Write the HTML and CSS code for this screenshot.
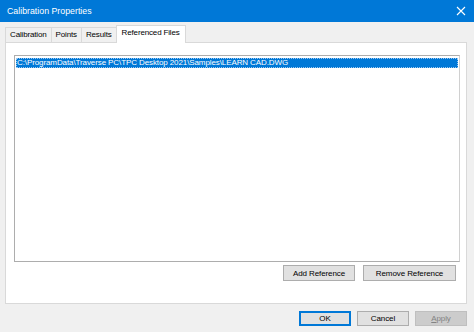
FILE: index.html
```html
<!DOCTYPE html>
<html lang="en" dir="ltr">
    <head>
        <meta charset="utf-8">
        <title>Calibration Properties</title>
        <link rel="stylesheet" href="styles.css">
    </head>
    <body>
        <div class="window">
            <div class="titlebar">
                <span class="title">Calibration Properties</span>
                <svg class="close" width="10" height="10" viewBox="0 0 10 10">
                    <path d="M1 1 L9 9 M9 1 L1 9" stroke="#fff" stroke-width="1.1" fill="none"/>
                </svg>
            </div>
            <div class="tabs">
                <div class="tab">Calibration</div>
                <div class="tab">Points</div>
                <div class="tab">Results</div>
                <div class="tab active">Referenced Files</div>
            </div>
            <div class="panel">
                <div class="listbox">
                    <div class="item selected">C:\ProgramData\Traverse PC\TPC Desktop 2021\Samples\LEARN CAD.DWG</div>
                </div>
                <div class="panelbuttons">
                    <button type="button" class="btn add">Add Reference</button>
                    <button type="button" class="btn remove">Remove Reference</button>
                </div>
            </div>
            <div class="footer">
                <button type="button" class="btn dlg default">OK</button>
                <button type="button" class="btn dlg">Cancel</button>
                <button type="button" class="btn dlg" disabled><u>A</u>pply</button>
            </div>
        </div>
    </body>
</html>
```

FILE: styles.css
```css
*{
    box-sizing: border-box;
    font-family: "Liberation Sans", Arial, sans-serif;
    font-size: 8px;
    letter-spacing: -0.1px;
}
body{
    margin: 0;
    padding: 0;
    background: #f0f0f0;
}
.window{
    width: 474px;
    height: 332px;
    display: flex;
    flex-direction: column;
    background: #f0f0f0;
}
.titlebar{
    height: 22px;
    background: #0078d7;
    display: flex;
    align-items: center;
    justify-content: space-between;
    padding: 0 8px 0 7px;
    color: #fff;
}
.title{
    font-size: 8.8px;
    letter-spacing: 0;
    color: #fff;
}
.tabs{
    display: flex;
    align-items: flex-end;
    height: 21px;
    padding-left: 5px;
    margin-top: -1px;
}
.tab{
    height: 15px;
    line-height: 13px;
    padding: 0 4px;
    border: 1px solid #d9d9d9;
    border-bottom: none;
    border-right: none;
    background: #f0f0f0;
    color: #000;
    letter-spacing: -0.15px;
}
.tab:nth-child(3){
    border-right: 1px solid #d9d9d9;
}
.tab.active{
    height: 18px;
    line-height: 14px;
    background: #fff;
    border: 1px solid #d9d9d9;
    border-bottom: none;
    padding: 0 5px;
    margin-bottom: -1px;
    margin-left: -1px;
    position: relative;
}
.panel{
    width: 462px;
    margin-left: 5px;
    height: 262px;
    background: #fff;
    border: 1px solid #d9d9d9;
    display: flex;
    flex-direction: column;
    padding: 12px 6px 0 8px;
}
.listbox{
    height: 207px;
    border: 1px solid #adadad;
    border-color: #adadad #d0d0d0 #adadad #adadad;
    padding: 2px 1px;
    background: #fff;
}
.item{
    height: 10px;
    line-height: 10px;
    padding-left: 1px;
    white-space: nowrap;
}
.item.selected{
    background: #0078d7;
    color: #fff;
    outline: 1px dotted #9cc8f0;
    outline-offset: -1px;
}
.panelbuttons{
    display: flex;
    justify-content: flex-end;
    gap: 8px;
    margin-top: 3px;
    padding-right: 4px;
}
.btn{
    height: 16px;
    border: 1px solid #adadad;
    background: #e1e1e1;
    color: #000;
    padding: 0;
    margin: 0;
}
.add{
    width: 72px;
}
.remove{
    width: 93px;
}
.footer{
    flex: 1;
    display: flex;
    justify-content: flex-end;
    align-items: flex-start;
    gap: 6px;
    padding: 7px 7px 0 0;
}
.dlg{
    width: 52px;
    height: 15px;
}
.dlg.default{
    border: 1px solid #0078d7;
    box-shadow: inset 0 0 0 1px #0078d7;
}
.btn:disabled{
    background: #cccccc;
    border-color: #bfbfbf;
    color: #838383;
}
.btn u{
    font-size: inherit;
}
```
